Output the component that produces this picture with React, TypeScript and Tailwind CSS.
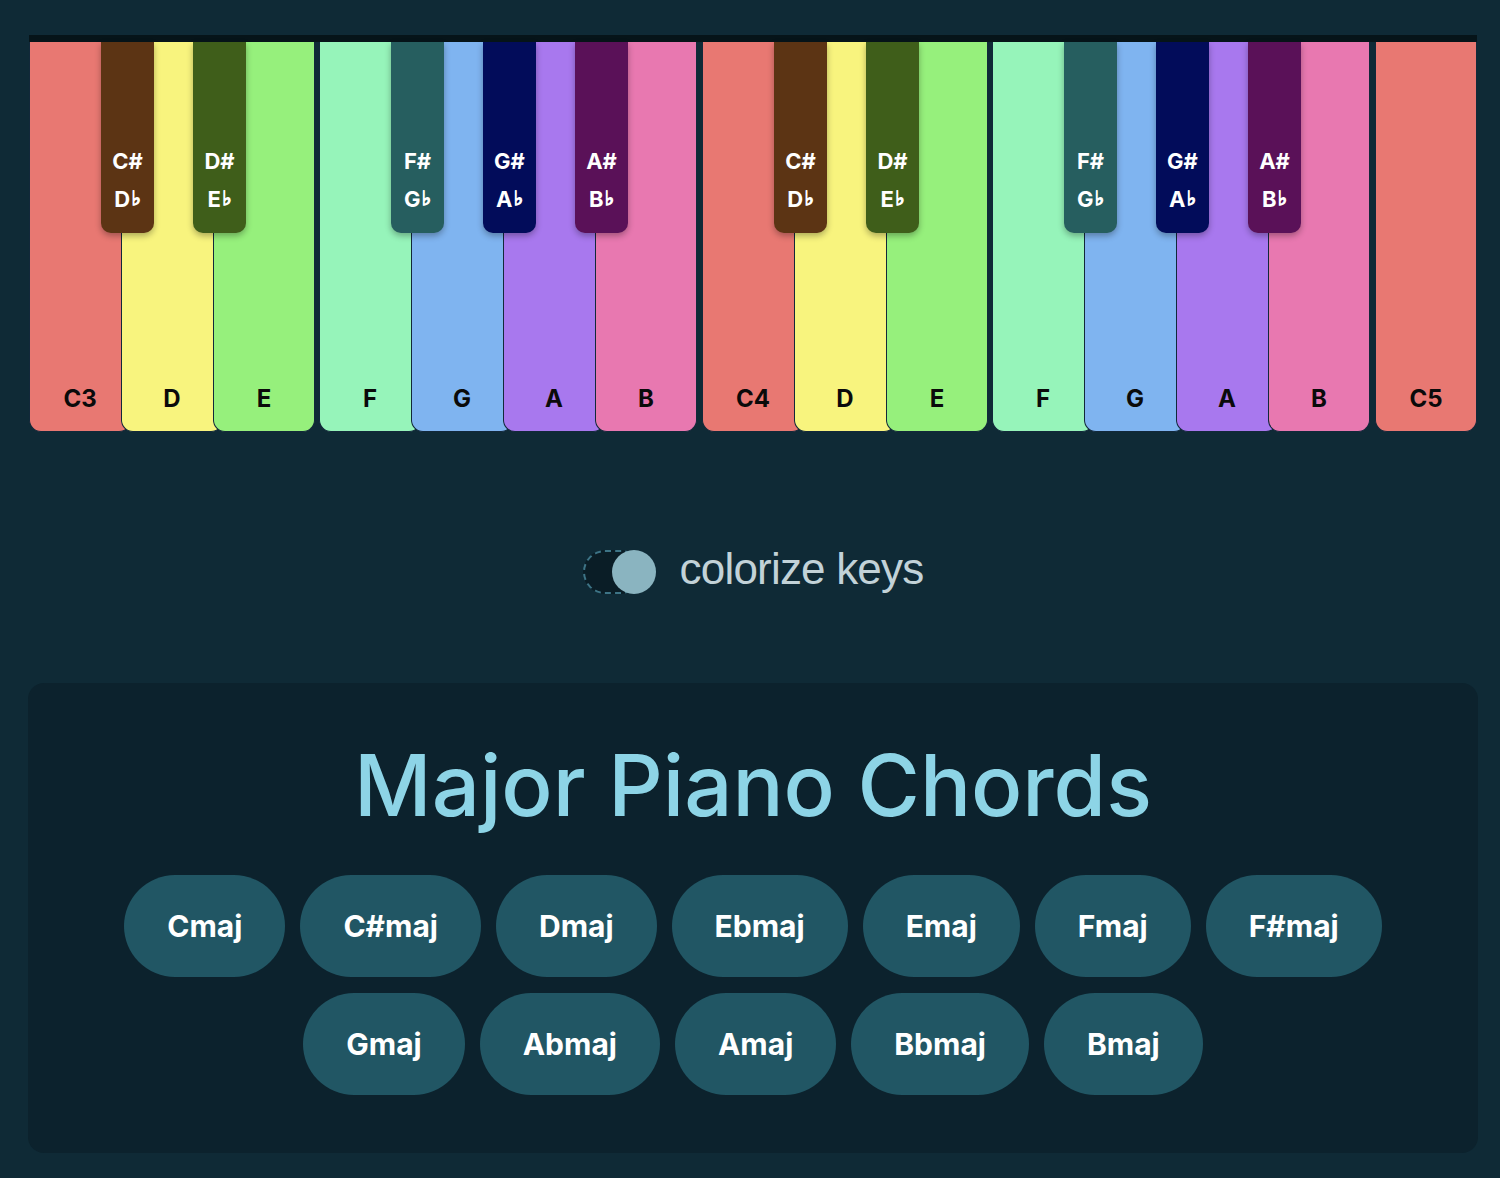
import React, { useState } from 'react';

type WhiteKey = {
  label: string;
  color: string;
  gap: 'none' | 'overlap' | 'split' | 'octave';
  sharp?: { top: string; bottom: string; color: string };
};

const keys: WhiteKey[] = [
  { label: 'C3', color: 'bg-[#e87872]', gap: 'none' },
  { label: 'D', color: 'bg-[#f8f47e]', gap: 'overlap', sharp: { top: 'C#', bottom: 'D', color: 'bg-[#5c3414]' } },
  { label: 'E', color: 'bg-[#96f07c]', gap: 'overlap', sharp: { top: 'D#', bottom: 'E', color: 'bg-[#3f5e1a]' } },
  { label: 'F', color: 'bg-[#96f4ba]', gap: 'split' },
  { label: 'G', color: 'bg-[#7fb4f0]', gap: 'overlap', sharp: { top: 'F#', bottom: 'G', color: 'bg-[#265e5f]' } },
  { label: 'A', color: 'bg-[#a878ee]', gap: 'overlap', sharp: { top: 'G#', bottom: 'A', color: 'bg-[#020c5a]' } },
  { label: 'B', color: 'bg-[#e878b0]', gap: 'overlap', sharp: { top: 'A#', bottom: 'B', color: 'bg-[#5a1158]' } },
  { label: 'C4', color: 'bg-[#e87872]', gap: 'octave' },
  { label: 'D', color: 'bg-[#f8f47e]', gap: 'overlap', sharp: { top: 'C#', bottom: 'D', color: 'bg-[#5c3414]' } },
  { label: 'E', color: 'bg-[#96f07c]', gap: 'overlap', sharp: { top: 'D#', bottom: 'E', color: 'bg-[#3f5e1a]' } },
  { label: 'F', color: 'bg-[#96f4ba]', gap: 'split' },
  { label: 'G', color: 'bg-[#7fb4f0]', gap: 'overlap', sharp: { top: 'F#', bottom: 'G', color: 'bg-[#265e5f]' } },
  { label: 'A', color: 'bg-[#a878ee]', gap: 'overlap', sharp: { top: 'G#', bottom: 'A', color: 'bg-[#020c5a]' } },
  { label: 'B', color: 'bg-[#e878b0]', gap: 'overlap', sharp: { top: 'A#', bottom: 'B', color: 'bg-[#5a1158]' } },
  { label: 'C5', color: 'bg-[#e87872]', gap: 'octave' },
];

const chords = [
  'Cmaj', 'C#maj', 'Dmaj', 'Ebmaj', 'Emaj', 'Fmaj', 'F#maj',
  'Gmaj', 'Abmaj', 'Amaj', 'Bbmaj', 'Bmaj',
];

const gapClass = {
  none: '',
  overlap: '-ml-[10px]',
  split: 'ml-[4px]',
  octave: 'ml-[5px]',
};

const Piano = () => (
  <div className="ml-px flex w-[1448px] border-t-[7px] border-[#061419]">
    {keys.map((k, i) => (
      <div
        key={i}
        className={`relative flex h-[390px] w-[102px] shrink-0 items-end justify-center rounded-b-[12px] border border-t-0 border-[#12283a] pb-[18px] ${k.color} ${gapClass[k.gap]}`}
      >
        {k.sharp && (
          <div
            className={`absolute -left-[21px] top-0 z-10 flex h-[191px] w-[53px] flex-col items-center justify-end gap-[12px] rounded-b-[10px] pb-[21px] text-[22px] font-bold leading-[26px] text-white shadow-[0_3px_6px_rgba(0,0,0,0.3)] ${k.sharp.color}`}
          >
            <span>{k.sharp.top}</span>
            <span>
              {k.sharp.bottom}
              <span className="ml-px align-[2px] text-[20px] font-bold leading-none [-webkit-text-stroke:1.2px_white] [font-family:'DejaVu_Sans',sans-serif]">♭</span>
            </span>
          </div>
        )}
        <span className="text-[24px] font-bold leading-[28px] text-[#0a0a0a]">{k.label}</span>
      </div>
    ))}
  </div>
);

const ColorizeToggle = () => {
  const [on, setOn] = useState(true);
  return (
    <button
      type="button"
      onClick={() => setOn(!on)}
      className="mx-auto mt-[118px] flex items-center gap-[24px] pl-[6px]"
    >
      <span className="relative block h-[44px] w-[73px]">
        <span className="block h-[44px] w-[60px] rounded-full border-2 border-dashed border-[#3d7486] bg-[#0a1d26]" />
        <span
          className={`absolute top-0 h-[44px] w-[44px] rounded-full bg-[#8ab4c0] ${on ? 'right-0' : 'left-0'}`}
        />
      </span>
      <span className="-mt-[7px] text-[44px] leading-[44px] tracking-[-0.8px] text-[#c2d2d8] [font-family:'Liberation_Sans',Arial,sans-serif]">
        colorize keys
      </span>
    </button>
  );
};

const ChordPanel = () => (
  <section className="mt-[89px] w-[1450px] rounded-[16px] bg-[#0c222d] pb-[58px] pt-[60px]">
    <h1 className="text-center text-[85px] font-medium leading-[86px] text-[#8dd4e6]">Major Piano Chords</h1>
    <div className="mx-auto mt-[46px] flex max-w-[1300px] flex-wrap justify-center gap-x-[15px] gap-y-[16px]">
      {chords.map((c) => (
        <button
          key={c}
          type="button"
          className="flex h-[102px] items-center rounded-full bg-[#215664] px-[43px] text-[30px] font-bold text-white"
        >
          {c}
        </button>
      ))}
    </div>
  </section>
);

export default function App() {
  return (
    <div className="flex min-h-screen flex-col bg-[#0f2a36] px-[28px] pb-[25px] pt-[35px] [font-family:Inter,'Noto_Sans',sans-serif]">
      <Piano />
      <ColorizeToggle />
      <ChordPanel />
    </div>
  );
}
